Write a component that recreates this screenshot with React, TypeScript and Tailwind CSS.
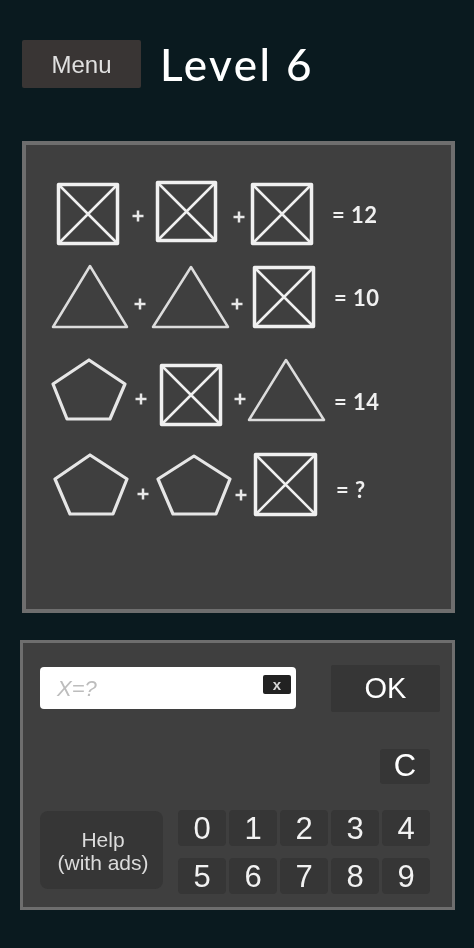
const SQUARES = [
  [57, 183, 62],
  [156, 181, 61],
  [251, 183, 62],
  [253, 266, 62],
  [160, 364, 62],
  [254, 453, 63],
];
const TRIANGLES = [
  [90, 264, 52, 128, 328],
  [191, 265, 152, 229, 328],
  [286, 358, 248, 325, 421],
];
const PENTAGONS = [
  [89, 358, 52, 126, 384, 66, 111, 421],
  [90, 453, 54, 128, 479, 69, 114, 516],
  [194, 454, 157, 231, 479, 172, 217, 516],
];
const PLUSES = [
  [138, 216],
  [239, 217],
  [140, 304],
  [237, 304],
  [141, 399],
  [240, 399],
  [143, 494],
  [241, 495],
];
const RESULTS: [number, number, string][] = [
  [332, 223, "= 12"],
  [334, 306, "= 10"],
  [334, 410, "= 14"],
  [336, 498, "= ?"],
];
const ROWS = [
  ["0", "1", "2", "3", "4"],
  ["5", "6", "7", "8", "9"],
];

function Puzzle() {
  return (
    <svg viewBox="26 145 425 464" className="block h-full w-full">
      <g fill="none" stroke="#f0f0f0" strokeLinejoin="round">
        {SQUARES.map(([x, y, s]) => (
          <g key={`${x}-${y}`}>
            <rect x={x + 1.5} y={y + 1.5} width={s - 3} height={s - 3} strokeWidth="3.5" />
            <path d={`M${x + 3} ${y + 3}L${x + s - 3} ${y + s - 3}M${x + s - 3} ${y + 3}L${x + 3} ${y + s - 3}`} strokeWidth="2.5" />
          </g>
        ))}
        {TRIANGLES.map(([ax, ay, l, r, b]) => (
          <path key={ax} d={`M${ax} ${ay + 2}L${r - 1} ${b - 1}L${l + 1} ${b - 1}Z`} strokeWidth="2.5" stroke="#dcdcdc" />
        ))}
        {PENTAGONS.map(([tx, ty, l, r, my, bl, br, b]) => (
          <path
            key={tx + ty}
            d={`M${tx} ${ty + 2}L${r - 1} ${my}L${br - 1} ${b - 2}L${bl + 1} ${b - 2}L${l + 1} ${my}Z`}
            strokeWidth="3.2"
            stroke="#e6e6e6"
          />
        ))}
        {PLUSES.map(([x, y]) => (
          <path key={`${x}-${y}`} d={`M${x - 5.5} ${y}H${x + 5.5}M${x} ${y - 5.5}V${y + 5.5}`} strokeWidth="2.5" stroke="#e8e8e8" />
        ))}
      </g>
      {RESULTS.map(([x, y, t]) => (
        <text key={t} x={x} y={y} fill="#f0f0f0" fontSize="22" fontWeight="700" letterSpacing="0.5" fontFamily="Lato, sans-serif">
          {t}
        </text>
      ))}
    </svg>
  );
}

export default function App() {
  return (
    <div className="h-[948px] w-[474px] overflow-hidden bg-[#0a1a1f] font-['Liberation_Sans',sans-serif] blur-[0.6px]">
      <header className="flex items-center pl-[22px] pt-10">
        <button className="h-12 w-[119px] rounded-[2px] bg-[#393534] pt-[1px] text-[24px] text-[#e0e0e0]">Menu</button>
        <h1 className="ml-[19px] font-['Lato',sans-serif] text-[44px] font-medium leading-[48px] tracking-[2.5px] text-white">Level 6</h1>
      </header>

      <section className="ml-[22px] mt-[53px] h-[472px] w-[433px] border-4 border-[#6e6e6e] bg-[#3f3f3f]">
        <Puzzle />
      </section>

      <section className="ml-5 mt-[27px] h-[270px] w-[435px] border-[3px] border-[#6e6e6e] bg-[#3f3f3f] pl-[17px] pt-[22px]">
        <div className="flex items-start">
          <div className="mt-[2px] flex h-[42px] w-[256px] items-center justify-between rounded-[4px] bg-white pl-[17px] pr-[5px]">
            <span className="text-[22px] italic text-[#bdbdbd]">X=?</span>
            <span className="-mt-[7px] flex h-[19px] w-[28px] items-center justify-center rounded-[2px] bg-[#222222] text-[15px] font-bold leading-none text-[#d8d8d8]">
              x
            </span>
          </div>
          <button className="ml-[35px] h-[47px] w-[109px] rounded-[2px] bg-[#363636] text-[29px] text-white">OK</button>
        </div>

        <div className="ml-[340px] mt-[37px] flex h-[35px] w-[50px] items-center justify-center rounded-[3px] bg-[#363636] text-[31px] text-white">
          C
        </div>

        <div className="mt-[26px] flex items-start">
          <button className="mt-[1px] h-[78px] w-[123px] rounded-lg bg-[#363636] pl-[3px] pt-[2px] text-[21px] leading-[23px] text-[#dcdcdc]">
            Help
            <br />
            (with ads)
          </button>
          <div className="ml-[15px] flex flex-col gap-3">
            {ROWS.map((row) => (
              <div key={row[0]} className="flex gap-[3px]">
                {row.map((d) => (
                  <button key={d} className="h-[36px] w-[48px] rounded-[4px] bg-[#363636] text-[31px] leading-none text-[#f2f2f2]">
                    {d}
                  </button>
                ))}
              </div>
            ))}
          </div>
        </div>
      </section>
    </div>
  );
}
